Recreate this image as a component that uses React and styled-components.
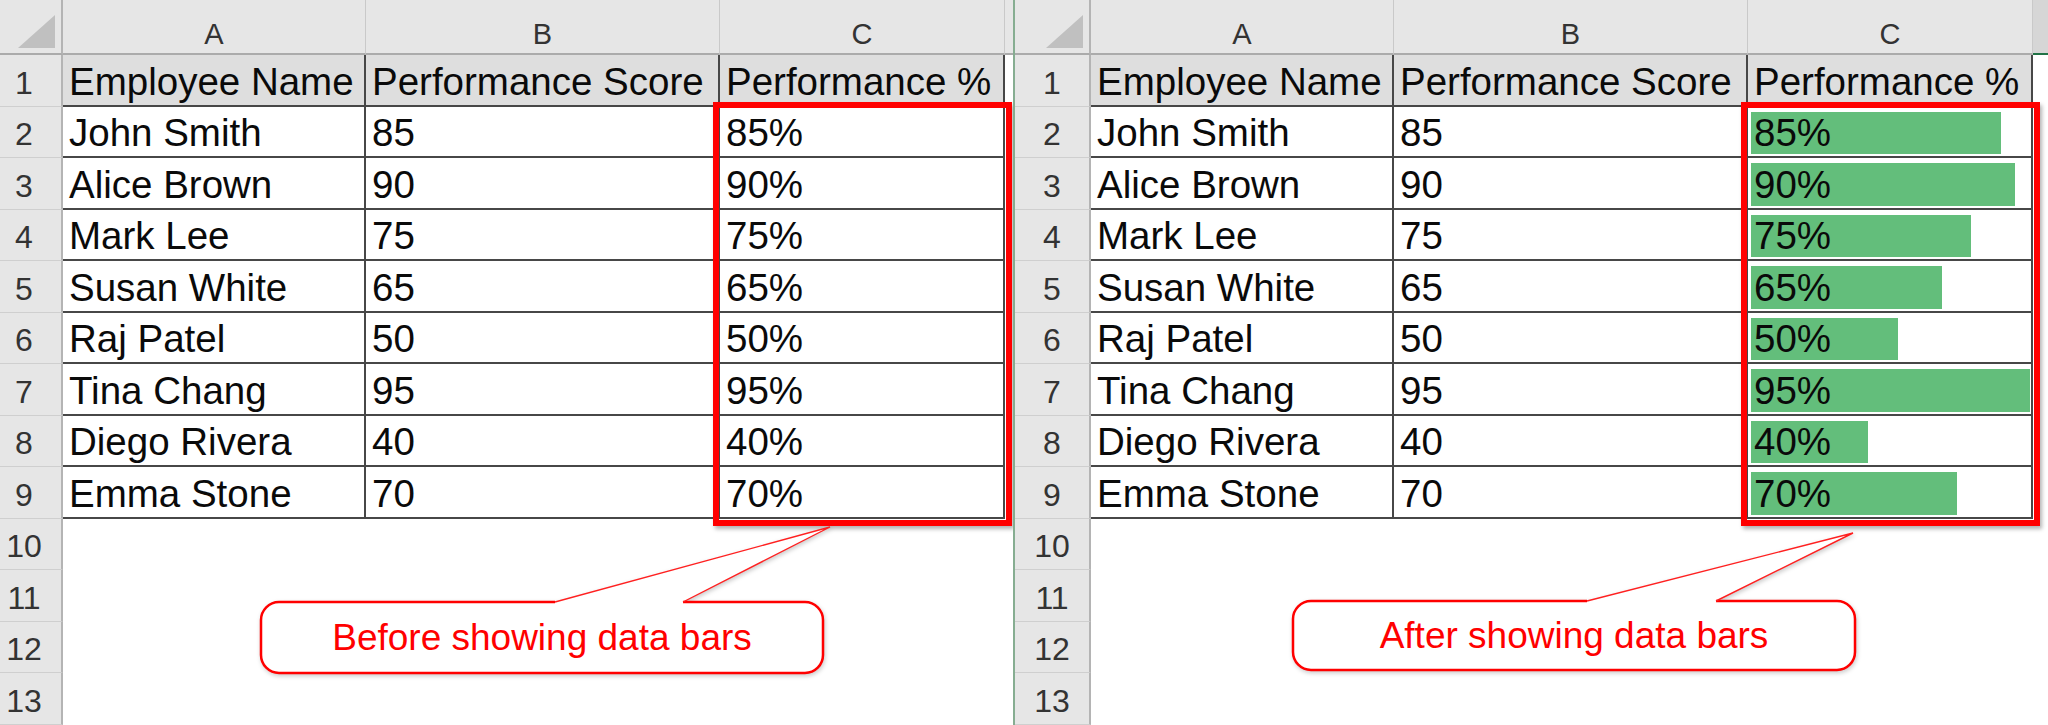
import React from 'react';
import styled, { createGlobalStyle, css } from 'styled-components';

const ROW_HEAD = 76;
const COLS = [303, 354, 285];
const HEAD_H = 55;
const ROW_H = 51.5;
const ROW_COUNT = 13;

const employees = [
    { name: 'John Smith', score: 85 },
    { name: 'Alice Brown', score: 90 },
    { name: 'Mark Lee', score: 75 },
    { name: 'Susan White', score: 65 },
    { name: 'Raj Patel', score: 50 },
    { name: 'Tina Chang', score: 95 },
    { name: 'Diego Rivera', score: 40 },
    { name: 'Emma Stone', score: 70 },
];
const maxScore = Math.max(...employees.map((e) => e.score));
const headers = ['Employee Name', 'Performance Score', 'Performance %'];

const GlobalStyle = createGlobalStyle`
html, body{
    margin:0;
    padding:0;
    background:#fff;
}
body{
    font-family:"Liberation Sans", Arial, sans-serif;
}
`;

const Callout = ({ box, gap, tip, children }) => {
    const [x0, y0, x1, y1] = box;
    const r = 18;
    const outline = `M${gap[1]} ${y0} L${x1 - r} ${y0} A${r} ${r} 0 0 1 ${x1} ${y0 + r} L${x1} ${y1 - r} A${r} ${r} 0 0 1 ${x1 - r} ${y1} L${x0 + r} ${y1} A${r} ${r} 0 0 1 ${x0} ${y1 - r} L${x0} ${y0 + r} A${r} ${r} 0 0 1 ${x0 + r} ${y0} L${gap[0]} ${y0}`;
    const tail = `M${gap[0]} ${y0} L${tip[0]} ${tip[1]} L${gap[1]} ${y0}`;
    return (
        <>
            <CalloutSvg width="100%" height="100%">
                <path d={`${outline} L${tip[0]} ${tip[1]} Z`} fill="#fff" />
                <path d={outline} fill="none" stroke="#ff0000" strokeWidth="2.5" />
                <path d={tail} fill="none" stroke="#ff2020" strokeWidth="1.4" />
            </CalloutSvg>
            <CalloutText $x={x0} $y={y0} $w={x1 - x0} $h={y1 - y0}>{children}</CalloutText>
        </>
    );
};

const Sheet = ({ crop, bars, activeD }) => {
    const rows = [];
    for (let r = 1; r <= ROW_COUNT; r++) {
        const emp = employees[r - 2];
        rows.push(<RowHead key={`h${r}`}>{r}</RowHead>);
        if (r === 1) {
            headers.forEach((h) => (
                rows.push(<Cell key={`${r}${h}`} $head><CellText>{h}</CellText></Cell>)
            ));
        } else if (emp) {
            rows.push(<Cell key={`${r}a`}><CellText>{emp.name}</CellText></Cell>);
            rows.push(<Cell key={`${r}b`}><CellText>{emp.score}</CellText></Cell>);
            rows.push(
                <Cell key={`${r}c`}>
                    {bars && <Bar style={{ width: `calc((100% - 4px) * ${emp.score / maxScore})` }} />}
                    <CellText>{emp.score}%</CellText>
                </Cell>
            );
        } else {
            COLS.forEach((c, i) => rows.push(<Blank key={`${r}e${i}`} />));
        }
        rows.push(<Blank key={`${r}d`} />);
    }
    return (
        <Grid $crop={crop}>
            <Corner />
            <ColHead>A</ColHead>
            <ColHead>B</ColHead>
            <ColHead>C</ColHead>
            <ColHead $active={activeD} $last />
            {rows}
            <Frame />
        </Grid>
    );
};

const App = () => {
    return (
        <>
            <GlobalStyle />
            <Page>
                <Pane $width={1013}>
                    <Sheet crop={13} />
                    <Callout box={[261, 602, 823, 673]} gap={[555, 683]} tip={[830, 527]}>
                        Before showing data bars
                    </Callout>
                </Pane>
                <Split />
                <Pane>
                    <Sheet crop={0} bars activeD />
                    <Callout box={[278, 601, 840, 670]} gap={[572, 701]} tip={[838, 533]}>
                        After showing data bars
                    </Callout>
                </Pane>
            </Page>
        </>
    );
};
export default App;

const Page = styled.div`
display:flex;
width:2048px;
height:725px;
overflow:hidden;
background:#fff;
`;
const Pane = styled.section`
position:relative;
overflow:hidden;
height:100%;
${(p) => (p.$width ? css`width:${p.$width}px; flex:none;` : css`flex:1;`)}
`;
const Split = styled.div`
width:2px;
flex:none;
background:#86ad91;
`;
const Grid = styled.div`
position:relative;
display:grid;
grid-template-columns:${ROW_HEAD}px ${COLS[0]}px ${COLS[1]}px ${COLS[2]}px minmax(0, 1fr);
grid-template-rows:${HEAD_H}px repeat(${ROW_COUNT}, ${ROW_H}px);
margin-left:${(p) => -p.$crop}px;
width:calc(100% + ${(p) => p.$crop}px);
font-family:"Liberation Sans", Arial, sans-serif;
`;
const ColHead = styled.div`
box-sizing:border-box;
display:flex;
align-items:flex-end;
justify-content:center;
padding-bottom:4px;
background:${(p) => (p.$active ? '#d6d6d6' : '#e6e6e6')};
border-right:${(p) => (p.$last ? 'none' : '1px solid #c9c9c9')};
border-bottom:2px solid ${(p) => (p.$active ? '#217346' : '#ababab')};
font-size:29px;
line-height:29px;
color:#333;
`;
const Corner = styled(ColHead)`
position:relative;
border-right:2px solid #b4b4b4;
&::after{
    content:'';
    position:absolute;
    right:6px;
    bottom:5px;
    width:37px;
    height:33px;
    background:#c0c0c0;
    clip-path:polygon(100% 0, 100% 100%, 0 100%);
}
`;
const RowHead = styled.div`
box-sizing:border-box;
display:flex;
align-items:center;
justify-content:center;
padding-top:6px;
background:#e6e6e6;
border-right:2px solid #b4b4b4;
border-bottom:1px solid #cfcfcf;
font-size:32px;
color:#333;
`;
const Cell = styled.div`
position:relative;
box-sizing:border-box;
display:flex;
align-items:flex-end;
padding:0 6px 2px;
background:${(p) => (p.$head ? '#dedede' : '#fff')};
border-right:2px solid #474747;
border-bottom:2px solid #474747;
font-size:38.5px;
line-height:42px;
color:#0a0a0a;
white-space:nowrap;
overflow:hidden;
`;
const CellText = styled.span`
position:relative;
`;
const Bar = styled.span`
position:absolute;
left:3px;
top:5px;
bottom:2px;
background:#63be7b;
`;
const Blank = styled.div`
background:#fff;
`;
const Frame = styled.div`
position:absolute;
left:${ROW_HEAD + COLS[0] + COLS[1] - 7}px;
top:${HEAD_H + ROW_H - 5}px;
width:${COLS[2] + 14}px;
height:${ROW_H * 8 + 12}px;
box-sizing:border-box;
border:6px solid #ff0000;
box-shadow:2px 3px 4px rgba(0,0,0,0.3);
pointer-events:none;
`;
const CalloutSvg = styled.svg`
position:absolute;
left:0;
top:0;
overflow:visible;
pointer-events:none;
filter:drop-shadow(1px 2px 2px rgba(0,0,0,0.2));
`;
const CalloutText = styled.div`
position:absolute;
left:${(p) => p.$x}px;
top:${(p) => p.$y}px;
width:${(p) => p.$w}px;
height:${(p) => p.$h}px;
display:flex;
align-items:center;
justify-content:center;
font-family:"Liberation Sans", Arial, sans-serif;
font-size:37px;
color:#ff0000;
pointer-events:none;
`;
